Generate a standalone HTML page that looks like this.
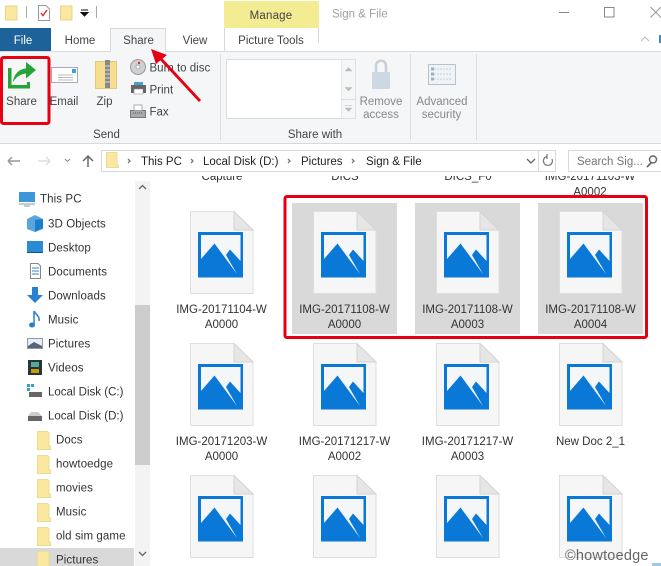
<!DOCTYPE html>
<html><head><meta charset="utf-8"><style>
html,body{margin:0;padding:0;background:#fff;width:661px;height:566px;overflow:hidden}
svg{display:block}
text{font-family:"Liberation Sans",sans-serif;font-size:11.5px;fill:#333;letter-spacing:0}
.m{text-anchor:middle}
.g{fill:#444}
.l{fill:#a0a0a0}
.f{fill:#fbe79f;stroke:#e8d48c;stroke-width:1}
.s{letter-spacing:.1px}
</style></head><body>
<svg width="661" height="566" viewBox="0 0 661 566" xmlns="http://www.w3.org/2000/svg">
<defs>
<g id="file">
<path d="M0.5 .5H44L63 19V82.500H.5Z" fill="#f6f6f6" stroke="#dedede"/>
<path d="M44 .5V19H63Z" fill="#e6e6e6" stroke="#d4d4d4"/>
<rect x="8" y="21" width="45" height="45.500" fill="#0a78d7"/>
<path d="M11 24H50.500V50L40 38.500L36 44L47 63L24.500 32.500L11 48Z" fill="#f4f6f8"/>
</g>
<g id="folder"><path d="M.5 .5H10L12 2V15H13.500V18.500H.5Z" fill="#fbe79f" stroke="#ecdb94"/></g>
</defs>

<!-- title bar -->
<rect x="224" y="1" width="95" height="27" fill="#f3ec93"/>
<path d="M5.500 6H17V20H5.500Z" class="f"/>
<path d="M26.500 6V18" stroke="#aaa"/>
<path d="M38.500 5.500H46L49.500 9V20.500H38.500Z" fill="#fff" stroke="#999"/>
<path d="M41 13L43 15.500L47 10" fill="none" stroke="#e02020" stroke-width="1.300"/>
<path d="M60.500 6H72V20H60.500Z" class="f"/>
<path d="M81 10H88M81 12.500H88L84.500 16Z" stroke="#111" fill="#111" stroke-width="1"/>
<path d="M96.500 6V18" stroke="#aaa"/>
<text x="271" y="19" class="m g" style="letter-spacing:.2px">Manage</text>
<text x="332" y="17.500" class="l">Sign &amp; File</text>
<path d="M559 12.500H569" stroke="#888"/>
<rect x="604.500" y="7.500" width="9.500" height="9.500" fill="none" stroke="#888"/>
<path d="M650.500 7L661 17.500M661 7L650.500 17.500" stroke="#999"/>

<!-- tabs -->
<rect x="0" y="28" width="51" height="23.500" fill="#1d6299"/>
<text x="23" y="44" class="m" style="fill:#fff">File</text>
<text x="80" y="44" class="m g">Home</text>
<text x="195" y="44" class="m g">View</text>
<text x="271" y="44" class="m g">Picture Tools</text>
<path d="M224.500 28V51M318.500 28V43" stroke="#d8d8d8"/>
<path d="M641 41L645 37L649 41" fill="none" stroke="#bbb"/>
<rect x="659" y="35" width="2" height="8" fill="#3b8ac4"/>

<!-- ribbon -->
<rect x="0" y="52" width="661" height="91" fill="#f5f6f7"/>
<path d="M0 51.500H110M166 51.500H661M0 143.500H661" stroke="#d9d9d9"/>
<path d="M110.500 52V28.500H165.500V52" fill="#f5f6f7" stroke="#d9d9d9"/>
<text x="138.500" y="44" class="m g">Share</text>
<path d="M220.500 54V140M410.500 54V140M476.500 54V140" stroke="#dcdfe2"/>

<!-- share icon -->
<path d="M8 68H11.500V85H27V82H30V88.500H8Z" fill="#27a338"/>
<path d="M13 82C14 74 19 69 26 68.500V62L36 70L26 78.500V73.500C21 74 17 76 13 82Z" fill="#27a338"/>
<text x="21.500" y="105" class="m g">Share</text>
<!-- email icon -->
<rect x="51.500" y="67.500" width="26" height="15" fill="#fff" stroke="#aab"/>
<rect x="72" y="69" width="4" height="4" fill="#39a0e0"/>
<path d="M58 75H73M58 77.500H73M58 80H73" stroke="#bbb"/>
<text x="64" y="105" class="m g">Email</text>
<!-- zip icon -->
<path d="M95.500 61.500H116.500V88.500H95.500Z" fill="#f7dd8e" stroke="#e2c878"/>
<rect x="105" y="60" width="5" height="28" fill="#888"/>
<path d="M105 66H110M105 70H110M105 74H110M105 78H110M105 82H110" stroke="#ddd"/>
<text x="104.500" y="105" class="m g">Zip</text>
<!-- burn / print / fax -->
<circle cx="138" cy="67" r="7.500" fill="#d0d0d0" stroke="#999"/>
<circle cx="138" cy="67" r="2" fill="#fff" stroke="#aaa"/>
<circle cx="139" cy="63" r="1.200" fill="#d33"/>
<path d="M131 85H146V93H131Z" fill="#666"/>
<rect x="134" y="82" width="9" height="3" fill="#4aa0d0"/>
<rect x="134" y="89" width="9" height="5" fill="#fff" stroke="#888" stroke-width=".5"/>
<path d="M130.500 110.500H145.500V117.500H130.500Z" fill="#aaa" stroke="#777"/>
<rect x="134" y="105" width="8" height="5.500" fill="#fff" stroke="#999" stroke-width=".8"/>
<path d="M133 113H143" stroke="#555" stroke-dasharray="1 1"/>
<text x="149.500" y="71.500" class="g">Burn to disc</text>
<text x="149.500" y="93.500" class="g">Print</text>
<text x="149.500" y="115.500" class="g">Fax</text>
<text x="106.500" y="138" class="m g">Send</text>
<!-- share-with box -->
<rect x="226.500" y="59.500" width="129" height="59" fill="#fff" stroke="#dcdcdc"/>
<rect x="341.500" y="59.500" width="14" height="59" fill="#f5f6f7" stroke="#d8d8d8" stroke-dasharray="1 1"/>
<path d="M348.500 67.500L352 71H345ZM345 87.500H352L348.500 91ZM345 105.500H352M345 108H352L348.500 111.500Z" fill="#bbb" stroke="#bbb" stroke-width=".5"/>
<path d="M341.500 99.500H355.500" stroke="#ddd"/>
<text x="315" y="138" class="m g">Share with</text>
<!-- remove access -->
<path d="M376 74V66C376 59 386 59 386 66V74" fill="none" stroke="#c8d0d7" stroke-width="2.500"/>
<rect x="372" y="72" width="18" height="17" rx="1" fill="#cdd8e2"/>
<text x="381" y="105" class="m" style="fill:#888">Remove</text>
<text x="381" y="118" class="m" style="fill:#888">access</text>
<!-- advanced security -->
<rect x="428.500" y="64.500" width="27" height="20" fill="#eef3f7" stroke="#b9c2ca"/>
<path d="M434 69H452M434 74H452M434 79H452" stroke="#c5cfd8" stroke-dasharray="2 1"/>
<path d="M431 67.500H434V70.500H431ZM431 72.500H434V75.500H431ZM431 77.500H434V80.500H431Z" fill="#9fb0bf"/>
<text x="442" y="105" class="m" style="fill:#888">Advanced</text>
<text x="441.500" y="118" class="m" style="fill:#888">security</text>

<!-- nav -->
<path d="M20 161H8M8 161L12 157M8 161L12 165" fill="none" stroke="#999" stroke-width="1.500"/>
<path d="M38 161H50M50 161L46 157M50 161L46 165" fill="none" stroke="#ddd" stroke-width="1.500"/>
<path d="M65 159L67.500 161.500L70 159" fill="none" stroke="#888"/>
<path d="M88 167V156M83 161L88 156L93 161" fill="none" stroke="#666" stroke-width="1.500"/>
<rect x="101.500" y="150.500" width="454" height="21" fill="#fff" stroke="#d9d9d9"/>
<path d="M106.500 152.500H117V165H118.500V167.500H106.500Z" fill="#fbe79f" stroke="#ecdb94"/>
<path d="M128 159L130 161L128 163M191 159L193 161L191 163M288 159L290 161L288 163M352 159L354 161L352 163" fill="none" stroke="#777" stroke-width="1.300"/>
<text x="141" y="165" style="fill:#222">This PC</text>
<text x="203" y="165" style="fill:#222">Local Disk (D:)</text>
<text x="301" y="165" style="fill:#222">Pictures</text>
<text x="366" y="165" style="fill:#222">Sign &amp; File</text>
<path d="M527 159L531 163L535 159" fill="none" stroke="#666" stroke-width="1.300"/>
<path d="M538.500 150V171" stroke="#d9d9d9"/>
<path d="M552 159A4.500 4.500 0 1 1 547 156.500M547 154V159" fill="none" stroke="#777" stroke-width="1.200"/>
<rect x="568.500" y="150.500" width="100" height="21" fill="#fff" stroke="#d9d9d9"/>
<text x="577" y="165" style="fill:#777">Search Sig...</text>
<circle cx="653" cy="159.500" r="3.500" fill="none" stroke="#666" stroke-width="1.500"/>
<path d="M651 163L647 167" stroke="#666" stroke-width="1.800"/>

<!-- sidebar -->
<rect x="135" y="181" width="15" height="385" fill="#f3f3f3"/>
<path d="M139 189L142.500 185.500L146 189M139 552L142.500 555.500L146 552" fill="none" stroke="#666" stroke-width="1.300"/>
<rect x="135" y="305" width="15" height="160" fill="#cdcdcd"/>
<rect x="0" y="548" width="134" height="18" fill="#d9d9d9"/>

<rect x="19" y="192" width="16" height="10" fill="#3d96d8"/><path d="M19 204H35M24 206H30" stroke="#8a9aa6"/>
<text x="40" y="202.500" class="s">This PC</text>
<path d="M27 219L35 215L43 219V229L35 232L27 229Z" fill="#5aa5dc"/><path d="M35 220V232L43 228V219Z" fill="#1b7fcc"/>
<text x="48" y="227.500" class="s">3D Objects</text>
<rect x="27" y="241" width="16" height="11" fill="#2a8ad4"/><path d="M27 252.500H43" stroke="#12558c"/>
<text x="48" y="251.500" class="s">Desktop</text>
<path d="M30.500 263.500H38L40.500 266V278.500H30.500Z" fill="#fff" stroke="#888"/><path d="M32 268H39M32 271H39M32 274H39" stroke="#3a86c8"/>
<text x="48" y="275.500" class="s">Documents</text>
<path d="M32 287H38V295H43L35 303L27 295H32Z" fill="#2a80d0"/>
<text x="48" y="299.500" class="s">Downloads</text>
<path d="M34 311V325M34 311C36 315 40 316 39 321" fill="none" stroke="#2a80d0" stroke-width="1.500"/><ellipse cx="32" cy="325" rx="3" ry="2.500" fill="#2a80d0"/>
<text x="48" y="323.500" class="s">Music</text>
<rect x="27.500" y="338.500" width="15" height="10" fill="#e8eef2" stroke="#8f9aa3"/><path d="M28 346L34 342L42 346V348H28Z" fill="#567"/>
<text x="48" y="347.500" class="s">Pictures</text>
<rect x="28" y="360" width="14" height="15" fill="#26343c"/><rect x="31" y="362" width="8" height="5" fill="#5a9"/><rect x="31" y="369" width="8" height="4" fill="#c90"/>
<text x="48" y="371.500" class="s">Videos</text>
<rect x="27" y="384" width="3" height="3" fill="#3a9ad8"/><rect x="31" y="384" width="3" height="3" fill="#3a9ad8"/><rect x="27" y="388" width="3" height="3" fill="#3a9ad8"/><path d="M29 392H42V397H29Z" fill="#666"/>
<text x="48" y="395.500">Local Disk (C:)</text>
<path d="M31 412H38L42 416H28Z" fill="#ccc"/><path d="M28 416H42V421H28Z" fill="#666"/>
<text x="48" y="419.500">Local Disk (D:)</text>
<use href="#folder" x="37" y="431"/><text x="56" y="443.500" class="s">Docs</text>
<use href="#folder" x="37" y="455"/><text x="56" y="467.500" class="s">howtoedge</text>
<use href="#folder" x="37" y="479"/><text x="56" y="491.500" class="s">movies</text>
<use href="#folder" x="37" y="503"/><text x="56" y="515.500" class="s">Music</text>
<use href="#folder" x="37" y="527"/><text x="56" y="539.500" class="s">old sim game</text>
<use href="#folder" x="37" y="551"/><text x="56" y="563.500" class="s">Pictures</text>

<!-- content -->
<rect x="292" y="203" width="105" height="131" fill="#d9d9d9"/>
<rect x="415" y="203" width="105" height="131" fill="#d9d9d9"/>
<rect x="538" y="203" width="105" height="131" fill="#d9d9d9"/>

<svg x="150" y="176" width="511" height="28" viewBox="150 176 511 28">
<text x="222" y="180" class="m">Capture</text>
<text x="345" y="180" class="m">DICS</text>
<text x="468" y="180" class="m">DICS_F0</text>
<text x="590" y="180" class="m">IMG-20171103-W</text>
<text x="590" y="195.500" class="m">A0002</text>
</svg>

<use href="#file" x="190" y="211"/><use href="#file" x="313" y="211"/><use href="#file" x="436" y="211"/><use href="#file" x="559" y="211"/>
<use href="#file" x="190" y="343"/><use href="#file" x="313" y="343"/><use href="#file" x="436" y="343"/><use href="#file" x="559" y="343"/>
<use href="#file" x="190" y="475"/><use href="#file" x="313" y="475"/><use href="#file" x="436" y="475"/><use href="#file" x="559" y="475"/>

<text x="221.500" y="313" class="m">IMG-20171104-W</text><text x="221.500" y="328" class="m">A0000</text>
<text x="344.500" y="313" class="m">IMG-20171108-W</text><text x="344.500" y="328" class="m">A0000</text>
<text x="467.500" y="313" class="m">IMG-20171108-W</text><text x="467.500" y="328" class="m">A0003</text>
<text x="590.500" y="313" class="m">IMG-20171108-W</text><text x="590.500" y="328" class="m">A0004</text>
<text x="221.500" y="445" class="m">IMG-20171203-W</text><text x="221.500" y="460" class="m">A0000</text>
<text x="344.500" y="445" class="m">IMG-20171217-W</text><text x="344.500" y="460" class="m">A0002</text>
<text x="467.500" y="445" class="m">IMG-20171217-W</text><text x="467.500" y="460" class="m">A0003</text>
<text x="590.500" y="445" class="m">New Doc 2_1</text>

<text x="565" y="560" style="font-size:14.5px;fill:#666;letter-spacing:.2px">©howtoedge</text>
<rect x="652" y="563" width="9" height="3" fill="#9cc8e8"/>

<!-- annotations -->
<rect x="1.500" y="57.500" width="47.500" height="66" rx="2" fill="none" stroke="#e60012" stroke-width="3"/>
<rect x="285" y="196.500" width="361.500" height="141" rx="2" fill="none" stroke="#e60012" stroke-width="3"/>
<path d="M200 101L161 59" stroke="#e60012" stroke-width="2.800"/>
<path d="M151 49L167 55L156 64Z" fill="#e60012"/>
</svg>
</body></html>
